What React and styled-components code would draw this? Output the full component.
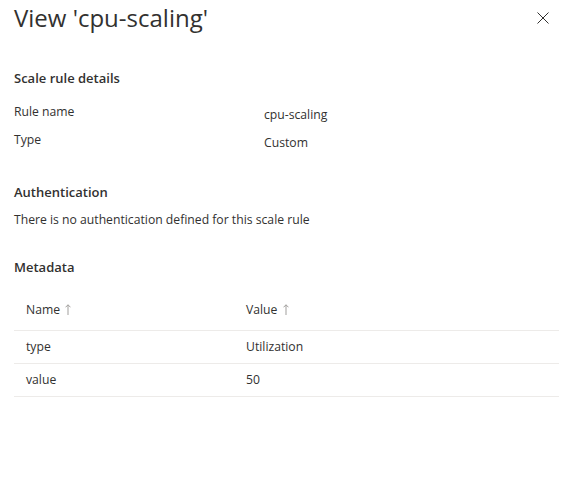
import React from 'react'
import styled, { createGlobalStyle } from 'styled-components'

const GlobalStyle = createGlobalStyle`
    html, body {
        margin: 0;
        padding: 0;
        background: #fff;
    }
    body {
        font-family: "Open Sans", "Noto Sans", sans-serif;
        color: #323130;
    }
`;

const details = [
    { label: 'Rule name', value: 'cpu-scaling' },
    { label: 'Type', value: 'Custom' },
]

const metadata = [
    { name: 'type', value: 'Utilization' },
    { name: 'value', value: '50' },
]

function CloseIcon() {
    return (
        <svg width="12" height="12" viewBox="0 0 12 12">
            <path d="M0.5 0.5 L11.5 11.5 M11.5 0.5 L0.5 11.5" stroke="#323130" strokeWidth="1" fill="none" />
        </svg>
    )
}

function SortArrow() {
    return (
        <ArrowIcon width="6" height="11" viewBox="0 0 6 11">
            <path d="M3 0.8 V11 M0.5 3.3 L3 0.8 L5.5 3.3" stroke="#a19f9d" strokeWidth="1" fill="none" />
        </ArrowIcon>
    )
}

function App() {
    return (
        <Panel>
            <GlobalStyle />
            <Header>
                <Title>View 'cpu-scaling'</Title>
                <CloseButton aria-label="Close"><CloseIcon /></CloseButton>
            </Header>

            <Section>
                <SectionTitle>Scale rule details</SectionTitle>
                <DetailGrid>
                    {details.map(d => (
                        <React.Fragment key={d.label}>
                            <Label>{d.label}</Label>
                            <Value>{d.value}</Value>
                        </React.Fragment>
                    ))}
                </DetailGrid>
            </Section>

            <Section $space={27}>
                <SectionTitle>Authentication</SectionTitle>
                <Text>There is no authentication defined for this scale rule</Text>
            </Section>

            <Section>
                <SectionTitle>Metadata</SectionTitle>
                <Table>
                    <thead>
                        <tr>
                            <Th $width={220}>Name <SortArrow /></Th>
                            <Th>Value <SortArrow /></Th>
                        </tr>
                    </thead>
                    <tbody>
                        {metadata.map(m => (
                            <tr key={m.name}>
                                <Td>{m.name}</Td>
                                <Td>{m.value}</Td>
                            </tr>
                        ))}
                    </tbody>
                </Table>
            </Section>
        </Panel>
    )
}

const Panel = styled.div`
    width: 565px;
    height: 477px;
    box-sizing: border-box;
    padding: 0 6px 0 14px;
    font-size: 12.2px;
`;

const Header = styled.div`
    display: flex;
    justify-content: space-between;
    align-items: flex-start;
    height: 68px;
    padding-top: 1px;
    box-sizing: border-box;
`;

const Title = styled.h1`
    margin: 0;
    font-size: 24px;
    font-weight: 400;
    line-height: 34px;
    color: #323130;
`;

const CloseButton = styled.button`
    border: none;
    background: none;
    padding: 0;
    margin: 11px 10px 0 0;
    width: 12px;
    height: 12px;
    display: flex;
    cursor: pointer;
`;

const Section = styled.div`
    margin-bottom: ${p => p.$space ?? 28}px;
`;

const SectionTitle = styled.h2`
    margin: 0 0 8px;
    font-size: 13px;
    font-weight: 600;
    line-height: 20px;
`;

const DetailGrid = styled.div`
    display: grid;
    grid-template-columns: 250px 1fr;
    row-gap: 4px;
    padding-top: 6px;
`;

const Label = styled.div`
    line-height: 20px;
    height: 24px;
`;

const Value = styled.div`
    line-height: 20px;
    padding-top: 3px;
`;

const Text = styled.p`
    margin: 0;
    line-height: 20px;
`;

const Table = styled.table`
    width: 545px;
    border-collapse: collapse;
    margin-top: 12px;
`;

const Th = styled.th`
    text-align: left;
    font-weight: 400;
    padding: 8px 12px;
    height: 41px;
    box-sizing: border-box;
    width: ${p => (p.$width ? `${p.$width}px` : 'auto')};
    border-bottom: 1px solid #edebe9;
`;

const ArrowIcon = styled.svg`
    margin-left: 2px;
    vertical-align: -1px;
`;

const Td = styled.td`
    padding: 6px 12px;
    height: 33px;
    box-sizing: border-box;
    border-bottom: 1px solid #edebe9;
`;

export default App;
